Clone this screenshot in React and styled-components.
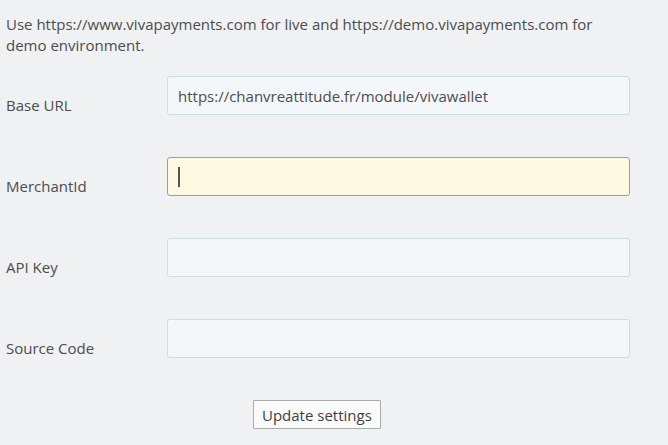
import React from 'react'
import styled, { createGlobalStyle } from 'styled-components'

const GlobalStyle = createGlobalStyle`
  html, body {
    margin: 0;
    padding: 0;
    background: #f0f1f3;
  }
  body {
    font-family: "Open Sans", "Noto Sans", sans-serif;
    font-size: 15px;
    color: #4a4d50;
  }
`

const Wrapper = styled.div`
  padding: 14px 6px 0 6px;
  width: 624px;
`

const Help = styled.p`
  margin: 0 0 20px 0;
  line-height: 21px;
`

const Row = styled.div`
  display: grid;
  grid-template-columns: 161px 463px;
  height: 81px;
  align-items: start;
`

const Label = styled.label`
  padding-top: 19px;
  line-height: 21px;
`

const Field = styled.input`
  box-sizing: border-box;
  height: 39px;
  width: 100%;
  margin: 0;
  padding: 0 10px;
  font-family: inherit;
  font-size: 15px;
  color: #4a4d50;
  background: ${p => (p.$focused ? '#fef9e2' : '#f4f7f9')};
  border: 1px solid ${p => (p.$focused ? '#6fa8dc' : '#cfdce3')};
  border-radius: 3px;
  outline: none;
`

const Caret = styled.span`
  position: absolute;
  left: 11px;
  top: 10px;
  width: 2px;
  height: 20px;
  background: #555;
`

const FieldWrap = styled.div`
  position: relative;
`

const Actions = styled.div`
  padding: 0 0 0 247px;
`

const Button = styled.button`
  height: 29px;
  padding: 0 8px;
  font-family: inherit;
  font-size: 15px;
  color: #3d3f42;
  background: #fbfbfb;
  border: 1px solid #ababab;
  border-radius: 1px;
`

const fields = [
  { label: 'Base URL', value: 'https://chanvreattitude.fr/module/vivawallet' },
  { label: 'MerchantId', value: '', focused: true },
  { label: 'API Key', value: '' },
  { label: 'Source Code', value: '' },
]

const App = () => (
  <>
    <GlobalStyle />
    <Wrapper>
      <Help>
        Use https://www.vivapayments.com for live and https://demo.vivapayments.com for demo environment.
      </Help>
      {fields.map(f => (
        <Row key={f.label}>
          <Label>{f.label}</Label>
          <FieldWrap>
            <Field $focused={f.focused} defaultValue={f.value} readOnly />
            {f.focused && <Caret />}
          </FieldWrap>
        </Row>
      ))}
      <Actions>
        <Button>Update settings</Button>
      </Actions>
    </Wrapper>
  </>
)

export default App
